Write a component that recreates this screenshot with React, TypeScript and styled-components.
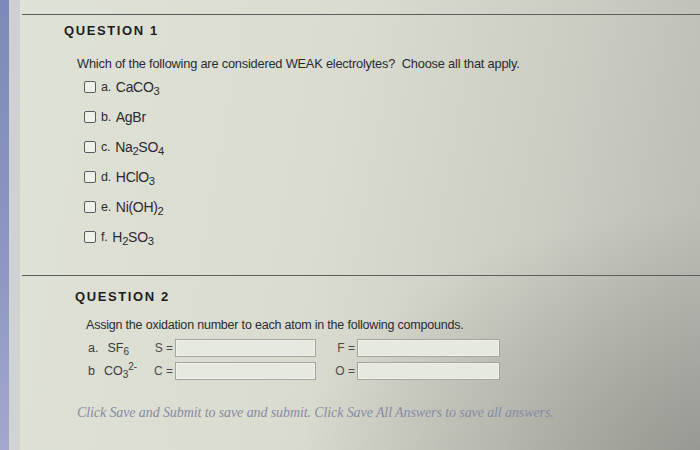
import { FC, ReactNode } from "react"
import styled, { createGlobalStyle } from "styled-components"

const GlobalStyle = createGlobalStyle`
  html, body {
    margin: 0;
    padding: 0;
    width: 700px;
    height: 450px;
    overflow: hidden;
  }
  body {
    font-family: "Liberation Sans", Arial, sans-serif;
    color: #26272c;
  }
`

const Page = styled.div`
  display: flex;
  width: 700px;
  height: 450px;
  background:
    radial-gradient(ellipse 420px 260px at 720px 470px, rgba(110, 112, 105, 0.5), rgba(110, 112, 105, 0) 100%),
    linear-gradient(100deg, #dfe2d6 0%, #dadcd0 45%, #cbcdc3 75%, #b9bbb4 100%);
`

const Rail = styled.div`
  width: 9px;
  flex-shrink: 0;
  background: linear-gradient(180deg, #7d89b8 0%, #8f97c2 60%, #a3a8cc 100%);
  border-right: 11px solid rgba(214, 216, 212, 0.9);
`

const Main = styled.div`
  flex: 1;
  display: flex;
  flex-direction: column;
  padding-top: 14px;
`

const Rule = styled.div`
  height: 1px;
  margin-left: 2px;
  background: #5d5f5c;
`

const Section = styled.section<{ $indent: number }>`
  display: flex;
  flex-direction: column;
  padding-left: ${({ $indent }) => $indent}px;
`

const Heading = styled.h2<{ $top?: number }>`
  margin: ${({ $top = 9 }) => $top}px 0 0;
  font-size: 13px;
  font-weight: 700;
  letter-spacing: 1.6px;
  line-height: 14px;
  color: #1d1e22;
`

const Prompt = styled.p<{ $top: number; $left?: number; $size?: number }>`
  margin: ${({ $top }) => $top}px 0 0 ${({ $left = 0 }) => $left}px;
  font-size: ${({ $size = 12.5 }) => $size}px;
  line-height: 15px;
  letter-spacing: -0.2px;
  color: #2a2b31;
`

const Options = styled.ul`
  list-style: none;
  margin: 8px 0 0 20px;
  padding: 0;
  display: flex;
  flex-direction: column;
  gap: 14px;
`

const Option = styled.li`
  display: flex;
  align-items: center;
  gap: 5px;
  height: 16px;
  font-size: 12.5px;
  color: #2a2b31;
`

const Box = styled.span`
  width: 10px;
  height: 10px;
  border: 1px solid #5a5c60;
  border-radius: 2px;
  background: #eef0ea;
`

const Key = styled.span`
  letter-spacing: -0.3px;
`

const Formula = styled.span`
  font-size: 14px;
  letter-spacing: -0.3px;
`

const Sub = styled.sub`
  font-size: 0.8em;
  vertical-align: -0.3em;
  line-height: 0;
`

const Sup = styled.sup`
  font-size: 0.8em;
  vertical-align: 0.5em;
  line-height: 0;
`

const AnswerGrid = styled.div`
  display: grid;
  grid-template-columns: 62px 25px 141px 41px 143px;
  row-gap: 5px;
  margin: 6px 0 0 13px;
  align-items: center;
  font-size: 12px;
  color: #3a3b40;
`

const Compound = styled.span`
  display: flex;
  gap: 9px;
  font-size: 12.5px;
`

const Label = styled.span`
  text-align: right;
  padding-right: 2px;
  color: #4a4b50;
`

const Field = styled.input`
  box-sizing: border-box;
  width: 100%;
  height: 18px;
  margin: 0;
  border: 1px solid #a2a49f;
  background: #e6e9df;
  box-shadow: inset 0 0 0 1px #f0f2ea;
`

const Footer = styled.p`
  margin: 25px 0 0 57px;
  font-family: "Liberation Serif", Georgia, serif;
  font-style: italic;
  font-size: 14px;
  letter-spacing: -0.1px;
  color: #858ba3;
`

const Divider = styled.div`
  margin-top: 30px;
`

const choices: { key: string; formula: ReactNode }[] = [
  { key: "a.", formula: <>CaCO<Sub>3</Sub></> },
  { key: "b.", formula: <>AgBr</> },
  { key: "c.", formula: <>Na<Sub>2</Sub>SO<Sub>4</Sub></> },
  { key: "d.", formula: <>HClO<Sub>3</Sub></> },
  { key: "e.", formula: <>Ni(OH)<Sub>2</Sub></> },
  { key: "f.", formula: <>H<Sub>2</Sub>SO<Sub>3</Sub></> },
]

const QuestionOne: FC = () => (
  <Section $indent={44}>
    <Heading>QUESTION 1</Heading>
    <Prompt $top={18} $left={13} $size={12.8}>
      Which of the following are considered WEAK electrolytes?&nbsp; Choose all that apply.
    </Prompt>
    <Options>
      {choices.map(({ key, formula }) => (
        <Option key={key}>
          <Box />
          <Key>{key}</Key>
          <Formula>{formula}</Formula>
        </Option>
      ))}
    </Options>
  </Section>
)

const QuestionTwo: FC = () => (
  <Section $indent={55}>
    <Heading $top={14}>QUESTION 2</Heading>
    <Prompt $top={14} $left={11}>
      Assign the oxidation number to each atom in the following compounds.
    </Prompt>
    <AnswerGrid>
      <Compound>
        <span>a.</span>
        <span>SF<Sub>6</Sub></span>
      </Compound>
      <Label>S =</Label>
      <Field />
      <Label>F =</Label>
      <Field />
      <Compound>
        <span>b</span>
        <span>CO<Sub>3</Sub><Sup>2-</Sup></span>
      </Compound>
      <Label>C =</Label>
      <Field />
      <Label>O =</Label>
      <Field />
    </AnswerGrid>
  </Section>
)

const App: FC = () => (
  <>
    <GlobalStyle />
    <Page>
      <Rail />
      <Main>
        <Rule />
        <QuestionOne />
        <Divider>
          <Rule />
        </Divider>
        <QuestionTwo />
        <Footer>
          Click Save and Submit to save and submit. Click Save All Answers to save all answers.
        </Footer>
      </Main>
    </Page>
  </>
)

export default App
